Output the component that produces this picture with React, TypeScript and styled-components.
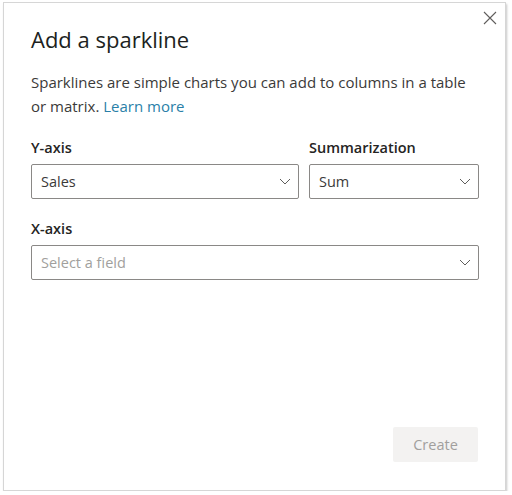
import styled, { createGlobalStyle } from 'styled-components';

const GlobalStyle = createGlobalStyle`
  body {
    margin: 0;
    background: #ffffff;
    font-family: "Open Sans", "Noto Sans", sans-serif;
    color: #252423;
  }
`;

const Dialog = styled.div`
  position: relative;
  box-sizing: border-box;
  width: 503px;
  height: 489px;
  margin: 2px 0 0 3px;
  border: 1px solid #d6d6d6;
  box-shadow: 1px 2px 2px rgba(0, 0, 0, 0.22);
  padding: 21px 27px 28px 27px;
  display: flex;
  flex-direction: column;
`;

const CloseButton = styled.button`
  position: absolute;
  top: 4px;
  right: 4px;
  width: 22px;
  height: 22px;
  padding: 0;
  border: none;
  background: transparent;
  display: flex;
  align-items: center;
  justify-content: center;
  color: #605e5c;
`;

const Title = styled.h2`
  margin: 0;
  font-size: 22px;
  line-height: 30px;
  font-weight: 400;
  color: #201f1e;
`;

const Description = styled.p`
  margin: 16px 0 0;
  font-size: 15px;
  line-height: 24px;
  color: #3b3a39;
`;

const Link = styled.a`
  color: #2a7fa8;
  text-decoration: none;
`;

const FieldRow = styled.div<{ $cols: string }>`
  display: grid;
  grid-template-columns: ${(p) => p.$cols};
  gap: 10px;
  margin-top: 20px;
`;

const Field = styled.div`
  display: flex;
  flex-direction: column;
`;

const Label = styled.label`
  font-size: 14.5px;
  line-height: 20px;
  font-weight: 600;
  color: #252423;
  margin-bottom: 6px;
`;

const Select = styled.div<{ $placeholder?: boolean }>`
  box-sizing: border-box;
  height: 35px;
  border: 1px solid #8a8886;
  border-radius: 2px;
  padding: 0 7px 0 9px;
  display: flex;
  align-items: center;
  justify-content: space-between;
  font-size: 14.5px;
  color: ${(p) => (p.$placeholder ? '#a19f9d' : '#3b3a39')};
`;

const Footer = styled.div`
  margin-top: auto;
  display: flex;
  justify-content: flex-end;
`;

const CreateButton = styled.button`
  width: 85px;
  height: 35px;
  border: none;
  border-radius: 2px;
  background: #f3f2f1;
  color: #a19f9d;
  font-family: inherit;
  font-size: 14.5px;
`;

const Chevron = () => (
  <svg width="12" height="7" viewBox="0 0 12 7" fill="none">
    <path d="M1 1 L6 6 L11 1" stroke="#605e5c" strokeWidth="1" />
  </svg>
);

const CloseIcon = () => (
  <svg width="14" height="14" viewBox="0 0 14 14" fill="none">
    <path d="M1 1 L13 13 M13 1 L1 13" stroke="#605e5c" strokeWidth="1.1" />
  </svg>
);

export default function App() {
  return (
    <>
      <GlobalStyle />
      <Dialog>
        <CloseButton aria-label="Close">
          <CloseIcon />
        </CloseButton>
        <Title>Add a sparkline</Title>
        <Description>
          Sparklines are simple charts you can add to columns in a table or matrix.{' '}
          <Link href="#">Learn more</Link>
        </Description>
        <FieldRow $cols="268px 170px">
          <Field>
            <Label>Y-axis</Label>
            <Select>
              Sales
              <Chevron />
            </Select>
          </Field>
          <Field>
            <Label>Summarization</Label>
            <Select>
              Sum
              <Chevron />
            </Select>
          </Field>
        </FieldRow>
        <FieldRow $cols="448px">
          <Field>
            <Label>X-axis</Label>
            <Select $placeholder>
              Select a field
              <Chevron />
            </Select>
          </Field>
        </FieldRow>
        <Footer>
          <CreateButton disabled>Create</CreateButton>
        </Footer>
      </Dialog>
    </>
  );
}
